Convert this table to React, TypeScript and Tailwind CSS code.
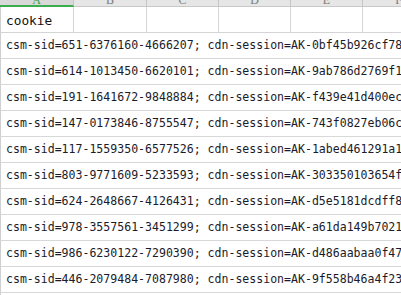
import React from "react";

const rows: [string, string][] = [
  ["651-6376160-4666207", "0bf45b926cf78a41"],
  ["614-1013450-6620101", "9ab786d2769f1c20"],
  ["191-1641672-9848884", "f439e41d400ec7b3"],
  ["147-0173846-8755547", "743f0827eb06cd15"],
  ["117-1559350-6577526", "1abed461291a1e09"],
  ["803-9771609-5233593", "303350103654f8a2"],
  ["624-2648667-4126431", "d5e5181dcdff8b64"],
  ["978-3557561-3451299", "a61da149b7021e5c"],
  ["986-6230122-7290390", "d486aabaa0f47d31"],
  ["446-2079484-7087980", "9f558b46a4f23a70"],
  ["312-5521907-1184620", "c27d0e94b1a58e02"],
];

const cols = [
  { l: "A", w: "w-[74px]" },
  { l: "B", w: "w-[73px]" },
  { l: "C", w: "w-[72px]" },
  { l: "D", w: "w-[72px]" },
  { l: "E", w: "w-[72px]" },
  { l: "F", w: "w-[72px]" },
];

export default function App() {
  return (
    <div className="w-[401px] h-[295px] overflow-hidden bg-white relative">
      {/* column header */}
      <div className="flex h-[7px] overflow-hidden">
        {cols.map((c, i) => (
          <div
            key={c.l}
            className={
              i === 0
                ? `${c.w} shrink-0 h-[7px] bg-[#d9d9d9] border-b-2 border-b-[#3dab4f] border-r border-r-[#c6c6c6] overflow-hidden flex justify-center`
                : `${c.w} shrink-0 h-[7px] bg-[#e6e6e6] border-b border-b-[#c8c8c8] border-r border-r-[#c6c6c6] overflow-hidden flex justify-center`
            }
          >
            <span
              className={
                i === 0
                  ? "block mt-[-6px] h-[12px] text-[12px] leading-[12px] text-[#2e9e40] font-['Liberation_Serif',serif]"
                  : "block mt-[-6px] h-[12px] text-[12px] leading-[12px] text-[#7a7a7a] font-['Liberation_Serif',serif]"
              }
            >
              {c.l}
            </span>
          </div>
        ))}
      </div>
      {/* first row */}
      <div className="flex h-[26px] border-b border-b-[#d4d4d4]">
        {cols.map((c, i) => (
          <div
            key={c.l}
            className={`${c.w} shrink-0 h-full border-r border-r-[#d4d4d4] ${i === 0 ? "border-l border-l-[#cfcfcf]" : ""} flex items-center`}
          >
            {i === 0 && (
              <span className="pl-[5px] pt-[3px] text-[12.8px] text-[#111] font-['DejaVu_Sans_Mono',monospace] whitespace-nowrap">
                cookie
              </span>
            )}
          </div>
        ))}
      </div>
      {/* data rows */}
      {rows.map(([sid, ak], i) => (
        <div
          key={i}
          className="h-[26px] border-b border-b-[#d8d8d8] border-l border-l-[#cfcfcf] flex items-center"
        >
          <span className="pl-[5px] text-[11.55px] text-[#1b1b2a] font-['DejaVu_Sans_Mono',monospace] whitespace-pre">
            {`csm-sid=${sid}; cdn-session=AK-${ak}`}
          </span>
        </div>
      ))}
    </div>
  );
}
